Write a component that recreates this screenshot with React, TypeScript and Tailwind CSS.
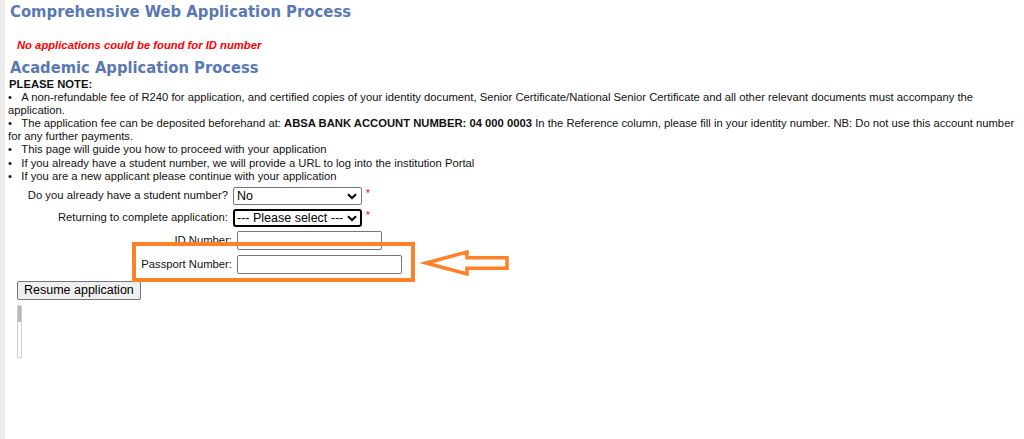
import React from "react";

const Chevron = () => (
  <svg width="10" height="7" viewBox="0 0 10 7" className="absolute right-[5px] top-[6px] pointer-events-none">
    <path d="M1 1.2 L5 5 L9 1.2" fill="none" stroke="#000" strokeWidth="2" />
  </svg>
);

const B = "\u2022\u00a0\u00a0\u00a0";

export default function App() {
  return (
    <div className="flex min-h-[439px] bg-white text-black" style={{ fontFamily: '"Liberation Sans", Arial, sans-serif' }}>
      <div className="w-[5px] shrink-0 bg-[#ececec]" />
      <div className="relative flex-1 pl-[3px] pr-[6px]">
        <h1
          className="pt-[1px] pl-[2px] text-[16.5px] font-bold leading-[22px] text-[#5a78b4]"
          style={{ fontFamily: '"DejaVu Sans Condensed", "DejaVu Sans", sans-serif' }}
        >
          Comprehensive Web Application Process
        </h1>
        <p className="mt-[16px] pl-[9px] text-[11.25px] font-bold italic leading-[13px] text-[#ff0000]">
          No applications could be found for ID number
        </p>
        <h2
          className="mt-[6px] pl-[2px] text-[16.4px] font-bold leading-[20px] text-[#5a78b4]"
          style={{ fontFamily: '"DejaVu Sans Condensed", "DejaVu Sans", sans-serif' }}
        >
          Academic Application Process
        </h2>
        <div className="text-[11.25px] leading-[13.1px] text-[#111]">
          <p className="pl-[1px] font-bold">PLEASE NOTE:</p>
          <p>
            {B}A non-refundable fee of R240 for application, and certified copies of your identity document, Senior Certificate/National Senior Certificate and all other relevant documents must accompany the application.
          </p>
          <p>
            {B}The application fee can be deposited beforehand at: <b>ABSA BANK ACCOUNT NUMBER: 04 000 0003</b> In the Reference column, please fill in your identity number. NB: Do not use this account number for any further payments.
          </p>
          <p>{B}This page will guide you how to proceed with your application</p>
          <p>{B}If you already have a student number, we will provide a URL to log into the institution Portal</p>
          <p>{B}If you are a new applicant please continue with your application</p>
        </div>

        <div className="mt-[2px] flex flex-col text-[11.25px] text-[#111]">
          <div className="flex h-[22px] items-center">
            <label className="w-[225px] pr-[5px] text-right">Do you already have a student number?</label>
            <div className="relative">
              <select className="h-[18px] w-[129px] appearance-none rounded-[2px] border border-[#767676] bg-white pl-[3px] text-[12.5px] leading-[16px] text-black outline-none">
                <option>No</option>
              </select>
              <Chevron />
            </div>
            <span className="ml-[4px] self-start pt-[1px] text-[10px] text-[#ff0000]">*</span>
          </div>
          <div className="flex h-[22px] items-center">
            <label className="w-[225px] pr-[5px] text-right">Returning to complete application:</label>
            <div className="relative">
              <select className="h-[18px] w-[129px] appearance-none rounded-[3px] border-2 border-black bg-white pl-[2px] text-[12.5px] leading-[14px] text-black outline-none">
                <option>--- Please select ---</option>
              </select>
              <Chevron />
            </div>
            <span className="ml-[4px] self-start pt-[1px] text-[10px] text-[#ff0000]">*</span>
          </div>
          <div className="flex h-[24px] items-center">
            <label className="w-[229px] pr-[5px] text-right">ID Number:</label>
            <input className="h-[19px] w-[145px] rounded-[2px] border border-[#767676] bg-white outline-none" />
          </div>
          <div className="flex h-[24px] items-center">
            <label className="w-[229px] pr-[5px] text-right">Passport Number:</label>
            <input className="h-[19px] w-[165px] rounded-[2px] border border-[#767676] bg-white outline-none" />
          </div>
          <div className="mt-[4px] pl-[9px]">
            <button className="h-[19px] rounded-[2px] border border-[#767676] bg-[#efefef] px-[6px] text-[12.5px] leading-[15px] text-black">
              Resume application
            </button>
          </div>
          <div className="ml-[9px] mt-[5px] flex h-[53px] w-[5px] flex-col rounded-[1px] border border-[#cfcfcf] bg-white">
            <div className="h-[16px] w-full bg-[#b8b8b8]" />
          </div>
        </div>

        <div className="absolute left-[127px] top-[242px] h-[40px] w-[283px] border-[4px] border-[#ff8127]" />
        <svg className="absolute left-[415px] top-[246px]" width="100" height="36" viewBox="0 0 100 36">
          <path d="M6 17 L47 6 L47 11.7 L87 11.7 L87 22.3 L47 22.3 L47 28 Z" fill="none" stroke="#ff8127" strokeWidth="3.5" strokeLinejoin="miter" />
        </svg>
      </div>
    </div>
  );
}
